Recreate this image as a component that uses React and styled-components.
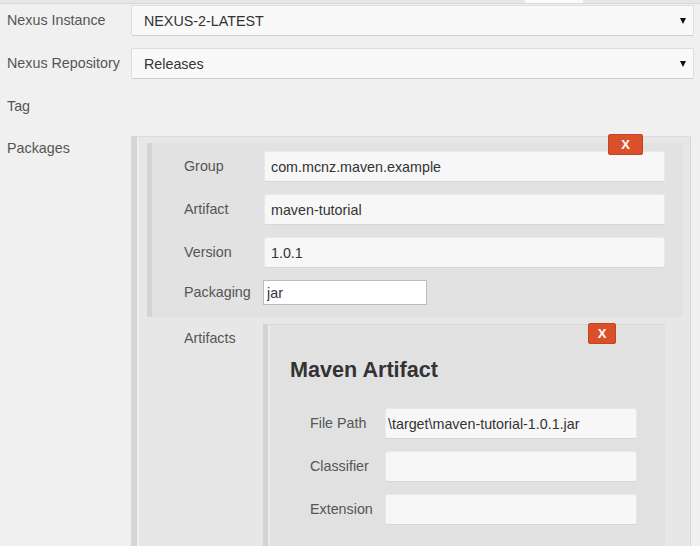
import React from 'react';
import styled, { createGlobalStyle } from 'styled-components';

const GlobalStyle = createGlobalStyle`
  html, body {
    margin: 0;
    padding: 0;
    background: #f0f0f0;
  }
  * {
    box-sizing: border-box;
  }
`;

export default function App() {
  return (
    <Page>
      <GlobalStyle />
      <TopStrip>
        <Tab />
      </TopStrip>
      <Form>
        <Row>
          <Label>Nexus Instance</Label>
          <SelectBox>
            <span>NEXUS-2-LATEST</span>
            <Arrow />
          </SelectBox>
        </Row>
        <Row $top={12}>
          <Label>Nexus Repository</Label>
          <SelectBox>
            <span>Releases</span>
            <Arrow />
          </SelectBox>
        </Row>
        <Row $top={12} $height={31}>
          <Label>Tag</Label>
        </Row>
        <Row $top={14} $align='flex-start'>
          <Label $padTop={5}>Packages</Label>
          <PackagesPanel>
            <GroupPanel>
              <RemoveButton $top={-9} $right={40} $w={35}>X</RemoveButton>
              <FieldRow>
                <FieldLabel>Group</FieldLabel>
                <TextInput readOnly value='com.mcnz.maven.example' />
              </FieldRow>
              <FieldRow>
                <FieldLabel>Artifact</FieldLabel>
                <TextInput readOnly value='maven-tutorial' />
              </FieldRow>
              <FieldRow>
                <FieldLabel>Version</FieldLabel>
                <TextInput readOnly value='1.0.1' />
              </FieldRow>
              <FieldRow>
                <FieldLabel>Packaging</FieldLabel>
                <PlainInput readOnly value='jar' />
              </FieldRow>
            </GroupPanel>
            <ArtifactsRow>
              <ArtifactsLabel>Artifacts</ArtifactsLabel>
              <ArtifactPanel>
                <RemoveButton $top={-2} $right={49} $w={28}>X</RemoveButton>
                <Heading>Maven Artifact</Heading>
                <ArtifactFields>
                  <FieldRow>
                    <ArtifactLabel>File Path</ArtifactLabel>
                    <TextInput readOnly value='\target\maven-tutorial-1.0.1.jar' $pad={2} />
                  </FieldRow>
                  <FieldRow>
                    <ArtifactLabel>Classifier</ArtifactLabel>
                    <TextInput readOnly value='' />
                  </FieldRow>
                  <FieldRow>
                    <ArtifactLabel>Extension</ArtifactLabel>
                    <TextInput readOnly value='' />
                  </FieldRow>
                </ArtifactFields>
              </ArtifactPanel>
            </ArtifactsRow>
          </PackagesPanel>
        </Row>
      </Form>
    </Page>
  );
}

const Page = styled.div`
  width: 700px;
  height: 546px;
  overflow: hidden;
  background: #f0f0f0;
  font-family: 'Liberation Sans', Arial, sans-serif;
  font-size: 14.3px;
  color: #333;
`;

const TopStrip = styled.div`
  display: flex;
  height: 4px;
  background: #e6e6e6;
  border-bottom: 1px solid #d8d8d8;
`;

const Tab = styled.div`
  margin-left: 525px;
  width: 58px;
  height: 3px;
  background: #fbfbfb;
`;

const Form = styled.div`
  display: flex;
  flex-direction: column;
  padding-top: 1px;
`;

const Row = styled.div`
  display: flex;
  align-items: ${(p) => p.$align || 'center'};
  margin-top: ${(p) => p.$top || 0}px;
  min-height: ${(p) => p.$height || 0}px;
`;

const Label = styled.div`
  width: 131px;
  flex: none;
  padding-left: 7px;
  padding-top: ${(p) => p.$padTop || 0}px;
  margin-top: -1px;
  color: #555;
  line-height: 16px;
`;

const SelectBox = styled.div`
  width: 563px;
  height: 31px;
  display: flex;
  align-items: center;
  justify-content: space-between;
  padding: 0 7px 0 12px;
  background: #f9f9f9;
  border: 1px solid #dedede;
  border-bottom-color: #cdcdcd;
  border-radius: 2px;
  color: #333;
`;

const Arrow = styled.span`
  width: 0;
  height: 0;
  border-left: 3.5px solid transparent;
  border-right: 3.5px solid transparent;
  border-top: 6px solid #111;
`;

const PackagesPanel = styled.div`
  width: 560px;
  min-height: 420px;
  padding: 6px 7px 0 10px;
  background: #e7e7e7;
  border-left: 6px solid #d6d6d6;
  border-top: 1px solid #dcdcdc;
  border-right: 1px solid #d6d6d6;
  box-shadow: inset 2px 0 0 #efefef;
`;

const GroupPanel = styled.div`
  position: relative;
  display: flex;
  flex-direction: column;
  gap: 12px;
  padding: 8px 18px 12px 0;
  background: #e2e2e2;
  border-left: 5px solid #d3d3d3;
`;

const RemoveButton = styled.div`
  position: absolute;
  top: ${(p) => p.$top}px;
  right: ${(p) => p.$right}px;
  width: ${(p) => p.$w}px;
  height: 21px;
  display: flex;
  align-items: center;
  justify-content: center;
  background: #d9502b;
  border: 1px solid #c4441f;
  border-radius: 2px;
  color: #fff;
  font-weight: bold;
  font-size: 13px;
`;

const FieldRow = styled.div`
  display: flex;
  align-items: center;
`;

const FieldLabel = styled.div`
  width: 112px;
  flex: none;
  padding-left: 32px;
  margin-top: -2px;
  color: #555;
`;

const TextInput = styled.input`
  flex: 1;
  height: 31px;
  padding: 0 0 0 ${(p) => (p.$pad != null ? p.$pad : 6)}px;
  background: #f7f7f7;
  border: 1px solid #e9e9e9;
  border-bottom-color: #d6d6d6;
  border-radius: 3px;
  font-family: inherit;
  font-size: 14.3px;
  color: #333;
  outline: none;
`;

const PlainInput = styled.input`
  width: 164px;
  height: 25px;
  margin-left: -1px;
  padding: 0 0 0 3px;
  background: #fff;
  border: 1px solid #bcbcbc;
  border-radius: 0;
  font-family: inherit;
  font-size: 14.3px;
  color: #333;
  outline: none;
`;

const ArtifactsRow = styled.div`
  display: flex;
  align-items: flex-start;
  margin-top: 7px;
  padding-right: 18px;
`;

const ArtifactsLabel = styled.div`
  width: 116px;
  flex: none;
  padding: 6px 0 0 37px;
  color: #555;
`;

const ArtifactPanel = styled.div`
  position: relative;
  flex: 1;
  min-height: 240px;
  padding: 0 28px 20px 0;
  background: #e1e1e1;
  border-left: 5px solid #d3d3d3;
  border-top: 1px solid #d9d9d9;
  box-shadow: inset 2px 0 0 #e9e9e9;
`;

const Heading = styled.h2`
  margin: 33px 0 26px 22px;
  font-size: 21.6px;
  line-height: 24px;
  font-weight: bold;
  color: #333;
`;

const ArtifactFields = styled.div`
  display: flex;
  flex-direction: column;
  gap: 12px;
`;

const ArtifactLabel = styled.div`
  width: 117px;
  flex: none;
  padding-left: 42px;
  margin-top: -1px;
  color: #555;
`;
